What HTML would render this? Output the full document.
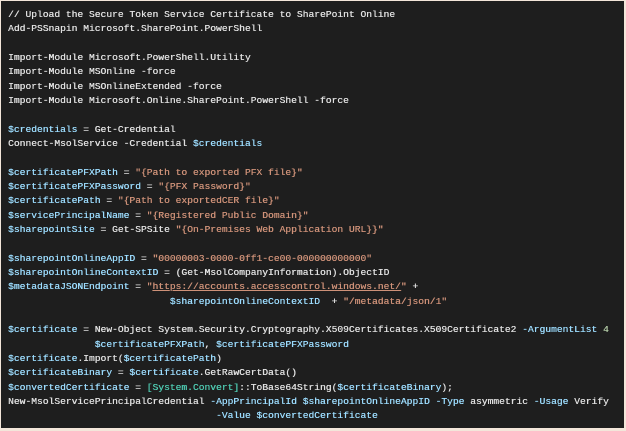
<!DOCTYPE html>
<html><head><meta charset="utf-8"><style>
html,body{margin:0;padding:0;background:#f3e6da;width:626px;height:431px;overflow:hidden}
.box{position:absolute;left:1px;top:1px;width:623px;height:427px;background:#1e1e1e}
pre{position:absolute;left:8px;top:8px;margin:0;font-family:"Liberation Mono",monospace;font-size:9.65px;line-height:14.33px;color:#e0e0e0;white-space:pre;text-shadow:0.3px 0 0 currentColor}
.v{color:#9cdcfe}.s{color:#ce9178}.t{color:#4ec9b0}.n{color:#b5cea8}.u{text-decoration:underline}
</style></head><body><div class="box"></div>
<pre>// Upload the Secure Token Service Certificate to SharePoint Online
Add-PSSnapin Microsoft.SharePoint.PowerShell

Import-Module Microsoft.PowerShell.Utility
Import-Module MSOnline -force
Import-Module MSOnlineExtended -force
Import-Module Microsoft.Online.SharePoint.PowerShell -force

<span class="v">$credentials</span> = Get-Credential
Connect-MsolService -Credential <span class="v">$credentials</span>

<span class="v">$certificatePFXPath</span> = <span class="s">"{Path to exported PFX file}"</span>
<span class="v">$certificatePFXPassword</span> = <span class="s">"{PFX Password}"</span>
<span class="v">$certificatePath</span> = <span class="s">"{Path to exportedCER file}"</span>
<span class="v">$servicePrincipalName</span> = <span class="s">"{Registered Public Domain}"</span>
<span class="v">$sharepointSite</span> = Get-SPSite <span class="s">"{On-Premises Web Application URL}}"</span>

<span class="v">$sharepointOnlineAppID</span> = <span class="s">"00000003-0000-0ff1-ce00-000000000000"</span>
<span class="v">$sharepointOnlineContextID</span> = (Get-MsolCompanyInformation).ObjectID
<span class="v">$metadataJSONEndpoint</span> = <span class="s">"<span class="u">https://accounts.accesscontrol.windows.net/</span>"</span> +
                            <span class="v">$sharepointOnlineContextID</span>  + <span class="s">"/metadata/json/1"</span>

<span class="v">$certificate</span> = New-Object System.Security.Cryptography.X509Certificates.X509Certificate2 <span class="v">-ArgumentList</span> <span class="n">4</span>
               <span class="v">$certificatePFXPath</span>, <span class="v">$certificatePFXPassword</span>
<span class="v">$certificate</span>.Import(<span class="v">$certificatePath</span>)
<span class="v">$certificateBinary</span> = <span class="v">$certificate</span>.GetRawCertData()
<span class="v">$convertedCertificate</span> = <span class="t">[System.Convert]</span>::ToBase64String(<span class="v">$certificateBinary</span>);
New-MsolServicePrincipalCredential <span class="v">-AppPrincipalId</span> <span class="v">$sharepointOnlineAppID</span> <span class="v">-Type</span> asymmetric <span class="v">-Usage</span> Verify
                                    <span class="v">-Value</span> <span class="v">$convertedCertificate</span></pre>
</body></html>
